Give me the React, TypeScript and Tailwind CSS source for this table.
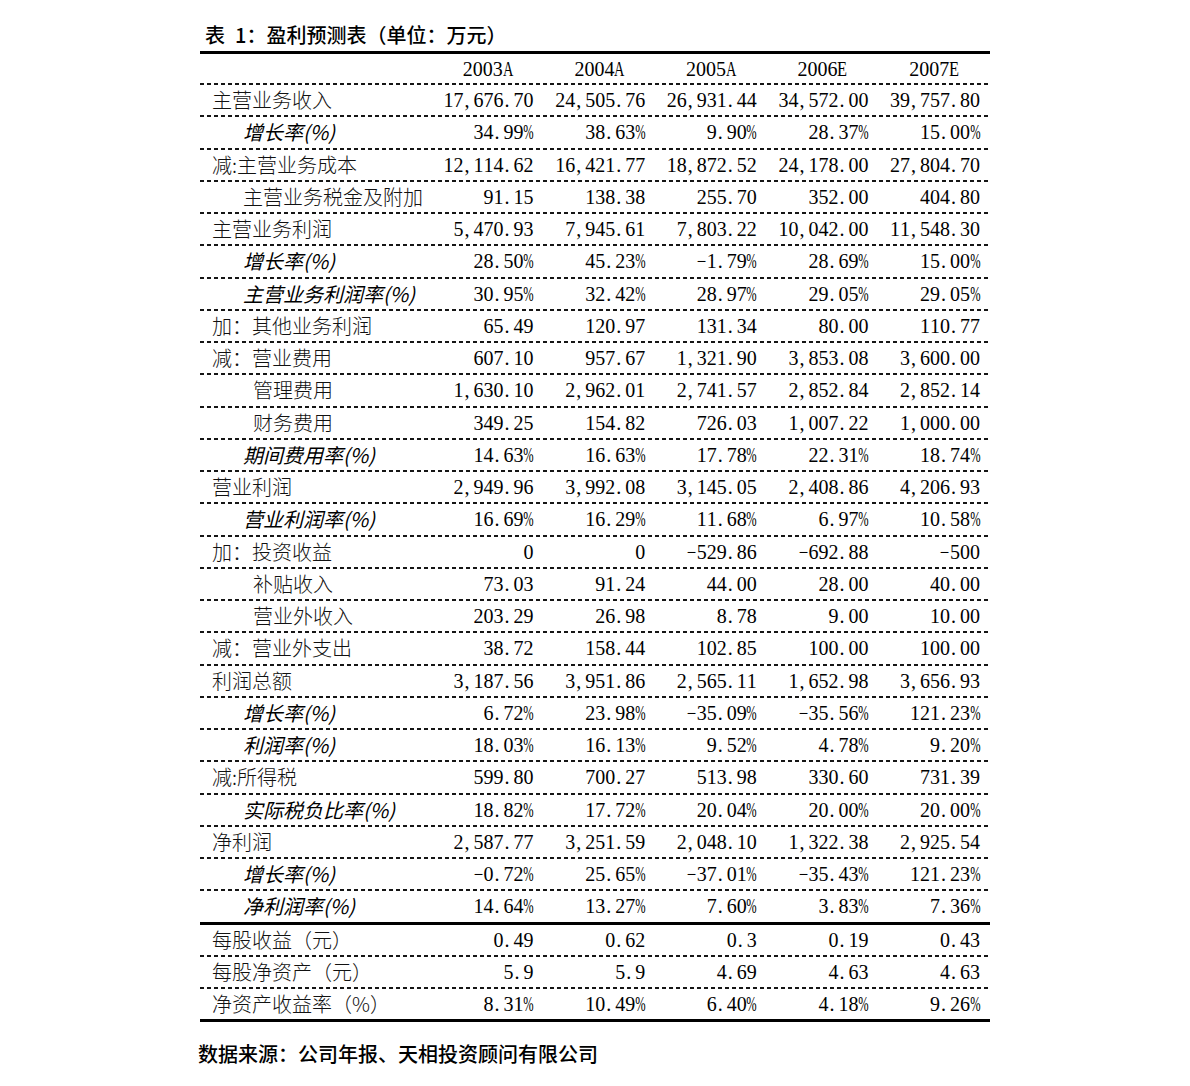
type Row = { label: string; indent?: "a" | "b" | "c"; italic?: boolean; values: string[] };

const INDENT = { a: "pl-[12px]", b: "pl-[43px]", c: "pl-[53px]" };

// 宋体的半角字符是等宽的，这里逐字符放进 10px 的格子里
const NARROW: Record<string, string> = {
  "%": "inline-block scale-x-[0.62]",
  A: "inline-block scale-x-[0.72]",
  E: "inline-block scale-x-[0.82]",
  "−": "inline-block scale-x-[0.85]",
};

const YEARS = ["2003A", "2004A", "2005A", "2006E", "2007E"];

const ROWS: Row[] = [
  { label: "主营业务收入", indent: "a", values: ["17,676.70", "24,505.76", "26,931.44", "34,572.00", "39,757.80"] },
  { label: "增长率(%)", indent: "b", italic: true, values: ["34.99%", "38.63%", "9.90%", "28.37%", "15.00%"] },
  { label: "减:主营业务成本", indent: "a", values: ["12,114.62", "16,421.77", "18,872.52", "24,178.00", "27,804.70"] },
  { label: "主营业务税金及附加", indent: "b", values: ["91.15", "138.38", "255.70", "352.00", "404.80"] },
  { label: "主营业务利润", indent: "a", values: ["5,470.93", "7,945.61", "7,803.22", "10,042.00", "11,548.30"] },
  { label: "增长率(%)", indent: "b", italic: true, values: ["28.50%", "45.23%", "−1.79%", "28.69%", "15.00%"] },
  { label: "主营业务利润率(%)", indent: "b", italic: true, values: ["30.95%", "32.42%", "28.97%", "29.05%", "29.05%"] },
  { label: "加：其他业务利润", indent: "a", values: ["65.49", "120.97", "131.34", "80.00", "110.77"] },
  { label: "减：营业费用", indent: "a", values: ["607.10", "957.67", "1,321.90", "3,853.08", "3,600.00"] },
  { label: "管理费用", indent: "c", values: ["1,630.10", "2,962.01", "2,741.57", "2,852.84", "2,852.14"] },
  { label: "财务费用", indent: "c", values: ["349.25", "154.82", "726.03", "1,007.22", "1,000.00"] },
  { label: "期间费用率(%)", indent: "b", italic: true, values: ["14.63%", "16.63%", "17.78%", "22.31%", "18.74%"] },
  { label: "营业利润", indent: "a", values: ["2,949.96", "3,992.08", "3,145.05", "2,408.86", "4,206.93"] },
  { label: "营业利润率(%)", indent: "b", italic: true, values: ["16.69%", "16.29%", "11.68%", "6.97%", "10.58%"] },
  { label: "加：投资收益", indent: "a", values: ["0", "0", "−529.86", "−692.88", "−500"] },
  { label: "补贴收入", indent: "c", values: ["73.03", "91.24", "44.00", "28.00", "40.00"] },
  { label: "营业外收入", indent: "c", values: ["203.29", "26.98", "8.78", "9.00", "10.00"] },
  { label: "减：营业外支出", indent: "a", values: ["38.72", "158.44", "102.85", "100.00", "100.00"] },
  { label: "利润总额", indent: "a", values: ["3,187.56", "3,951.86", "2,565.11", "1,652.98", "3,656.93"] },
  { label: "增长率(%)", indent: "b", italic: true, values: ["6.72%", "23.98%", "−35.09%", "−35.56%", "121.23%"] },
  { label: "利润率(%)", indent: "b", italic: true, values: ["18.03%", "16.13%", "9.52%", "4.78%", "9.20%"] },
  { label: "减:所得税", indent: "a", values: ["599.80", "700.27", "513.98", "330.60", "731.39"] },
  { label: "实际税负比率(%)", indent: "b", italic: true, values: ["18.82%", "17.72%", "20.04%", "20.00%", "20.00%"] },
  { label: "净利润", indent: "a", values: ["2,587.77", "3,251.59", "2,048.10", "1,322.38", "2,925.54"] },
  { label: "增长率(%)", indent: "b", italic: true, values: ["−0.72%", "25.65%", "−37.01%", "−35.43%", "121.23%"] },
  { label: "净利润率(%)", indent: "b", italic: true, values: ["14.64%", "13.27%", "7.60%", "3.83%", "7.36%"] },
];

const PER_SHARE: Row[] = [
  { label: "每股收益（元）", indent: "a", values: ["0.49", "0.62", "0.3", "0.19", "0.43"] },
  { label: "每股净资产（元）", indent: "a", values: ["5.9", "5.9", "4.69", "4.63", "4.63"] },
  { label: "净资产收益率（%）", indent: "a", values: ["8.31%", "10.49%", "6.40%", "4.18%", "9.26%"] },
];

function Num({ text }: { text: string }) {
  return (
    <span className="inline-flex font-['Liberation_Serif',serif] text-[20px] leading-none">
      {[...text].map((c, i) => (
        <span
          key={i}
          className={c === "," || c === "." ? "inline-flex w-[10px] justify-start pl-[1px]" : "inline-flex w-[10px] justify-center"}
        >
          <span className={NARROW[c] ?? ""}>{c}</span>
        </span>
      ))}
    </span>
  );
}

function Dashed() {
  return <div className="h-[2px] bg-[repeating-linear-gradient(90deg,#151515_0_4px,transparent_4px_7px)]" />;
}

function Thick() {
  return <div className="h-[3px] bg-black" />;
}

function DataRow({ row }: { row: Row }) {
  return (
    <div className="grid h-[30.25px] grid-cols-[232px_repeat(5,1fr)] items-center">
      <div
        className={`${INDENT[row.indent ?? "a"]} whitespace-nowrap font-['Noto_Sans_CJK_SC',sans-serif] text-[20px] leading-none ${
          row.italic ? "italic font-normal" : "font-light text-[#111]"
        }`}
      >
        {row.label}
      </div>
      {row.values.map((v, i) => (
        <div key={i} className="flex justify-end pr-[10px]">
          <Num text={v} />
        </div>
      ))}
    </div>
  );
}

export default function App() {
  return (
    <div className="min-h-screen bg-white text-black">
      <div className="ml-[200px] w-[790px] pt-[21px]">
        <h2 className="h-[28px] pl-[5px] font-['Noto_Sans_CJK_SC',sans-serif] text-[20px] leading-[28px] font-medium">
          表{"\u2002"}1：盈利预测表（单位：万元）
        </h2>
        <div className="mt-[2px]">
          <Thick />
        </div>

        <div className="grid h-[29px] grid-cols-[232px_repeat(5,1fr)] items-center">
          <div />
          {YEARS.map((y) => (
            <div key={y} className="flex justify-center">
              <Num text={y} />
            </div>
          ))}
        </div>
        <Dashed />

        {ROWS.map((row, i) => (
          <div key={i}>
            <DataRow row={row} />
            {i < ROWS.length - 1 ? <Dashed /> : <Thick />}
          </div>
        ))}

        {PER_SHARE.map((row, i) => (
          <div key={i}>
            <DataRow row={row} />
            {i < PER_SHARE.length - 1 ? <Dashed /> : <Thick />}
          </div>
        ))}

        <p className="mt-[18px] -ml-[2px] font-['Noto_Sans_CJK_SC',sans-serif] text-[20px] leading-[28px] font-medium">
          数据来源：公司年报、天相投资顾问有限公司
        </p>
      </div>
    </div>
  );
}
